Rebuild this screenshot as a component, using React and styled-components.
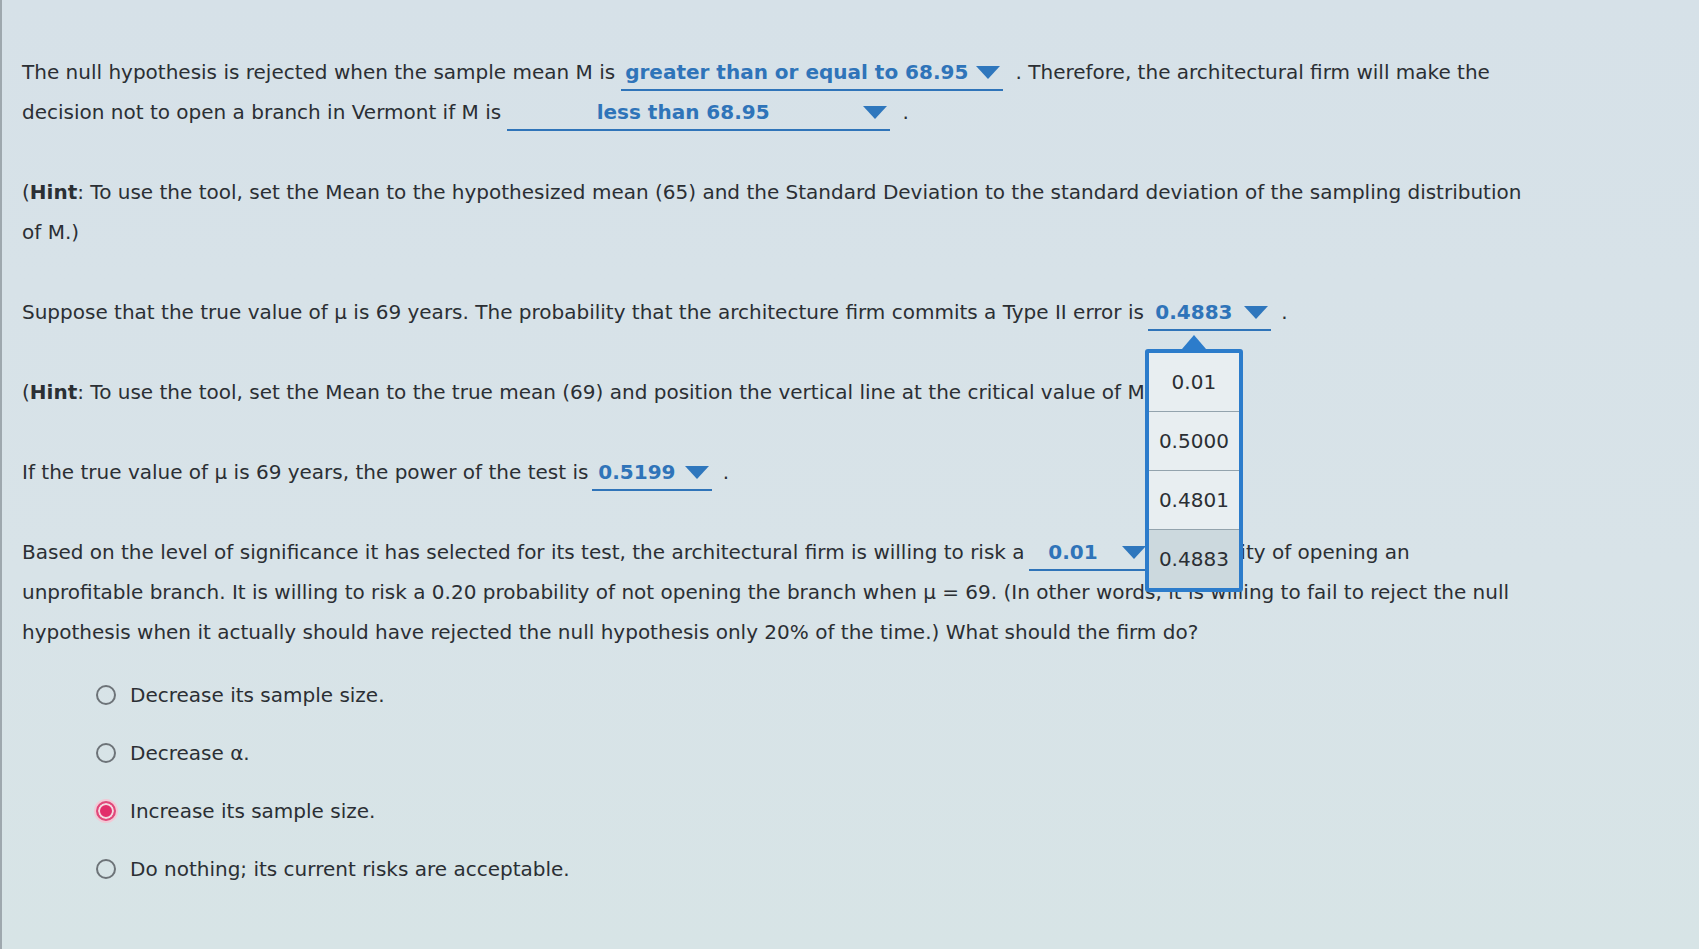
import React from "react";
import styled, { createGlobalStyle } from "styled-components";

const GlobalStyle = createGlobalStyle`
  html, body {
    margin: 0;
    padding: 0;
  }
  body {
    background: linear-gradient(180deg, #d6e1e8 0%, #d8e3e8 60%, #d7e4e6 100%);
    color: #2b2f34;
    font-family: "DejaVu Sans", Verdana, sans-serif;
    font-size: 20px;
    min-height: 949px;
  }
`;

const Page = styled.main`
  box-sizing: border-box;
  min-height: 949px;
  padding: 52px 0 0 20px;
  max-width: 1532px;
  border-left: 2px solid #9ea8ae;
`;

const Para = styled.p`
  margin: 0 0 ${(p) => (p.$last ? 30 : 40)}px;
  line-height: 40px;
`;

const Select = styled.span`
  position: relative;
  display: inline-flex;
  align-items: baseline;
  box-sizing: border-box;
  width: ${(p) => p.$width}px;
  margin: 0 ${(p) => p.$gap || 4}px;
  padding: 0 3px 4px 4px;
  border-bottom: 2px solid #2f74b9;
  line-height: 26px;
  color: #2f74b9;
  font-weight: bold;
  .value {
    flex: 1 1 auto;
    text-align: center;
    white-space: nowrap;
  }
`;

const Caret = styled.span`
  flex: 0 0 auto;
  align-self: center;
  width: 0;
  height: 0;
  margin-left: 8px;
  border-left: 12px solid transparent;
  border-right: 12px solid transparent;
  border-top: 13px solid #2f77bd;
`;

const Menu = styled.div`
  position: absolute;
  left: -3px;
  top: calc(100% + 20px);
  z-index: 5;
  width: 98px;
  box-sizing: border-box;
  border: 4px solid #2c7ccb;
  border-radius: 3px;
  background: #e7edf0;
  font-weight: normal;
  color: #2b2f34;
  &:before {
    content: "";
    position: absolute;
    left: 33px;
    top: -18px;
    border-left: 12px solid transparent;
    border-right: 12px solid transparent;
    border-bottom: 14px solid #2c7ccb;
  }
`;

const MenuItem = styled.div`
  height: 58px;
  display: flex;
  align-items: center;
  justify-content: center;
  background: ${(p) => (p.$active ? "#ccd9de" : "#e8eef1")};
  & + & {
    border-top: 1px solid #93a3ad;
  }
`;

const Options = styled.div`
  display: flex;
  flex-direction: column;
  gap: 32px;
  padding-left: 74px;
`;

const Option = styled.label`
  display: flex;
  align-items: center;
  gap: 14px;
  line-height: 26px;
`;

const Radio = styled.span`
  flex: 0 0 auto;
  box-sizing: border-box;
  width: 20px;
  height: 20px;
  border-radius: 50%;
  border: 2px solid ${(p) => (p.$checked ? "#e0487a" : "#6d7378")};
  background: ${(p) => (p.$checked ? "#e22d6a" : "transparent")};
  box-shadow: ${(p) =>
    p.$checked ? "inset 0 0 0 2px #f3d9e0, 0 0 0 2px #f2c9d6" : "none"};
`;

const Dropdown = ({ value, width, gap, children }) => (
  <Select $width={width} $gap={gap}>
    <span className="value">{value}</span>
    <Caret />
    {children}
  </Select>
);

const choices = [
  { label: "Decrease its sample size.", checked: false },
  { label: "Decrease α.", checked: false },
  { label: "Increase its sample size.", checked: true },
  { label: "Do nothing; its current risks are acceptable.", checked: false },
];

export default function App() {
  return (
    <>
      <GlobalStyle />
      <Page>
        <Para>
          The null hypothesis is rejected when the sample mean M is
          <Dropdown value="greater than or equal to 68.95" width={382} gap={6} />{" "}
          . Therefore, the architectural firm will make the decision not to
          open a branch in Vermont if M is
          <Dropdown value="less than 68.95" width={383} gap={6} /> .
        </Para>

        <Para>
          (<b>Hint</b>: To use the tool, set the Mean to the hypothesized mean
          (65) and the Standard Deviation to the standard deviation of the
          sampling distribution of M.)
        </Para>

        <Para>
          Suppose that the true value of μ is 69 years. The probability that
          the architecture firm commits a Type II error is
          <Dropdown value="0.4883" width={123}>
            <Menu>
              <MenuItem>0.01</MenuItem>
              <MenuItem>0.5000</MenuItem>
              <MenuItem>0.4801</MenuItem>
              <MenuItem $active>0.4883</MenuItem>
            </Menu>
          </Dropdown>{" "}
          .
        </Para>

        <Para>
          (<b>Hint</b>: To use the tool, set the Mean to the true mean (69) and
          position the vertical line at the critical value of M (68.95).)
        </Para>

        <Para>
          If the true value of μ is 69 years, the power of the test is
          <Dropdown value="0.5199" width={120} /> .
        </Para>

        <Para $last>
          Based on the level of significance it has selected for its test, the
          architectural firm is willing to risk a
          <Dropdown value="0.01" width={120} /> probability of opening an
          unprofitable branch. It is willing to risk a 0.20 probability of not
          opening the branch when μ = 69. (In other words, it is willing to
          fail to reject the null hypothesis when it actually should have
          rejected the null hypothesis only 20% of the time.) What should the
          firm do?
        </Para>

        <Options>
          {choices.map((c) => (
            <Option key={c.label}>
              <Radio $checked={c.checked} />
              {c.label}
            </Option>
          ))}
        </Options>
      </Page>
    </>
  );
}
